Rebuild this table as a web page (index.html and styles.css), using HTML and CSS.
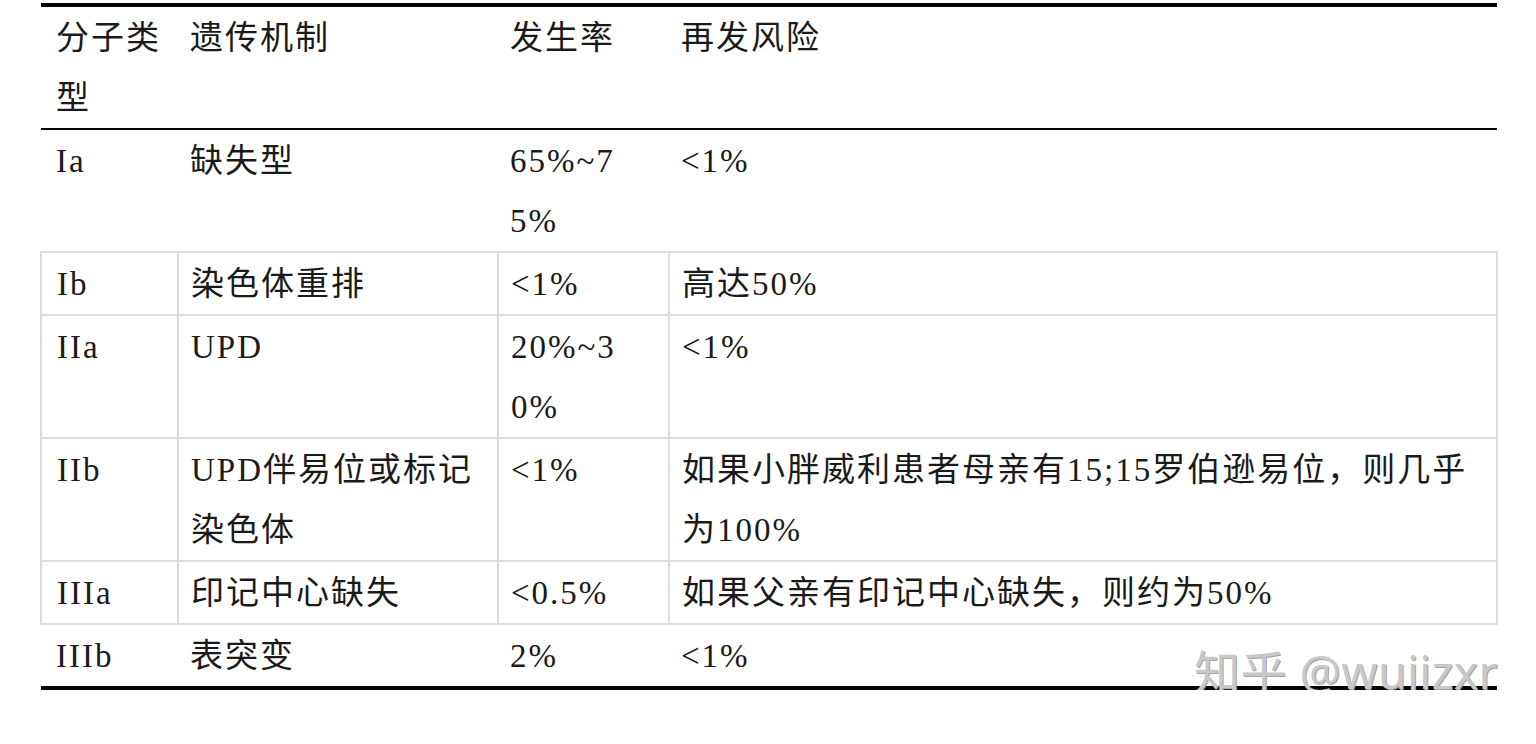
FILE: index.html
```html
<!DOCTYPE html>
<html>
<head>
<meta charset="utf-8">
<link rel="stylesheet" href="styles.css">
</head>
<body>
<div class="page">
  <table class="tbl">
    <colgroup>
      <col class="c1"><col class="c2"><col class="c3"><col class="c4">
    </colgroup>
    <thead>
      <tr>
        <th>分子类型</th>
        <th>遗传机制</th>
        <th>发生率</th>
        <th>再发风险</th>
      </tr>
    </thead>
    <tbody>
      <tr>
        <td>Ia</td><td>缺失型</td><td>65%~75%</td><td>&lt;1%</td>
      </tr>
      <tr class="b">
        <td>Ib</td><td>染色体重排</td><td>&lt;1%</td><td>高达50%</td>
      </tr>
      <tr class="b">
        <td>IIa</td><td>UPD</td><td>20%~30%</td><td>&lt;1%</td>
      </tr>
      <tr class="b">
        <td>IIb</td><td>UPD伴易位或标记染色体</td><td>&lt;1%</td><td>如果小胖威利患者母亲有15;15罗伯逊易位，则几乎为100%</td>
      </tr>
      <tr class="b">
        <td>IIIa</td><td>印记中心缺失</td><td>&lt;0.5%</td><td>如果父亲有印记中心缺失，则约为50%</td>
      </tr>
      <tr class="last">
        <td>IIIb</td><td>表突变</td><td>2%</td><td>&lt;1%</td>
      </tr>
    </tbody>
  </table>
  <div class="wm">知乎 @wujizxr</div>
</div>
</body>
</html>
```

FILE: styles.css
```css
html, body {
  margin: 0;
  padding: 0;
  background: #ffffff;
}

.page {
  position: relative;
  padding: 3px 0 0 40px;
  width: 1456px;
}

.tbl {
  width: 1456px;
  table-layout: fixed;
  border-collapse: collapse;
  border-top: 4px solid #000;
  border-bottom: 4px solid #000;
  font-family: "Liberation Serif", "Noto Sans CJK SC", serif;
  font-size: 33px;
  letter-spacing: 2px;
  line-height: 60px;
  color: #1a1a1a;
}

.c1 { width: 137px; }
.c2 { width: 320px; }
.c3 { width: 171px; }
.c4 { width: 828px; }

.tbl th,
.tbl td {
  text-align: left;
  vertical-align: top;
  font-weight: normal;
  padding: 1px 12px 0 12px;
  word-break: break-all;
}

.tbl th:first-child,
.tbl td:first-child {
  padding-left: 15px;
}

.tbl thead tr {
  border-bottom: 2px solid #000;
}

.tbl tr.b td {
  border: 2px solid #dcdcdc;
}

.tbl tr.tall td {
  padding-bottom: 2px;
}

.wm {
  position: absolute;
  left: 1194px;
  top: 641px;
  font-family: "Noto Sans", "Noto Sans CJK SC", sans-serif;
  font-size: 46px;
  letter-spacing: 0.5px;
  line-height: 60px;
  color: #c8c8c8;
  text-shadow: 1px 1px 0 #a4a4a4;
  white-space: nowrap;
}
```
